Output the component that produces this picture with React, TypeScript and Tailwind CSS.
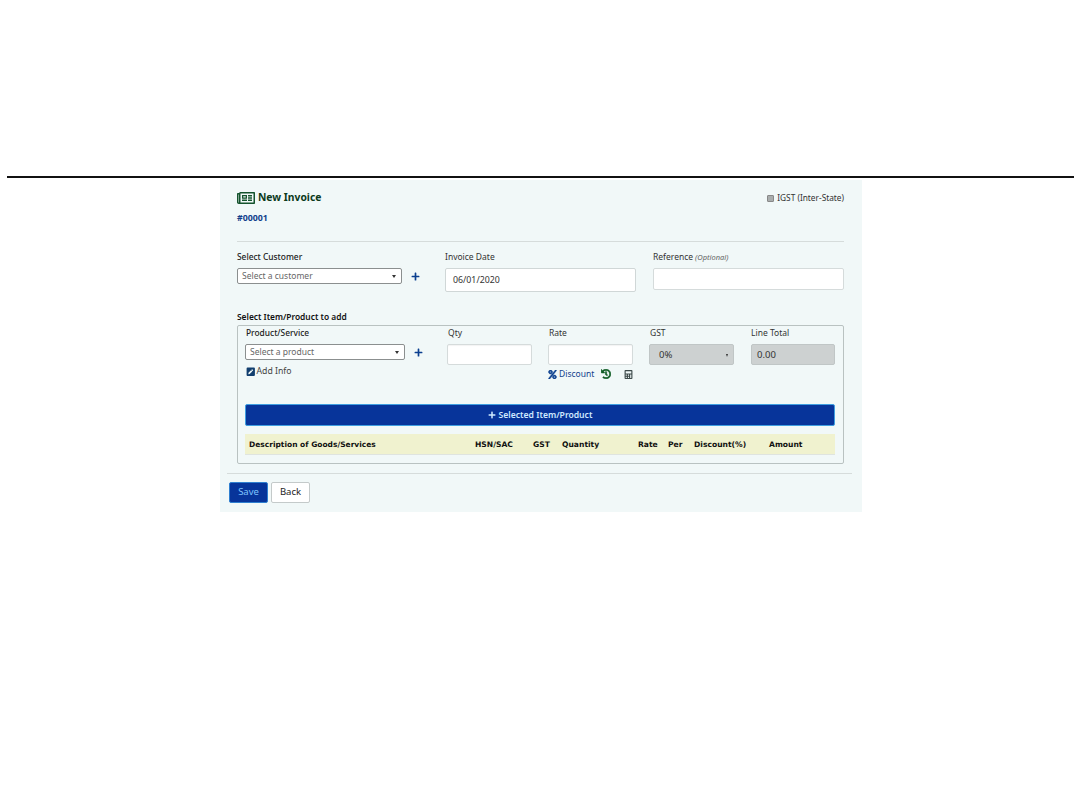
import React from 'react'
import { FaRegNewspaper, FaPlus, FaPercent, FaHistory, FaCalculator, FaPenSquare } from 'react-icons/fa'

const bodyFont = "font-['Noto_Sans',sans-serif]"
const tableFont = "font-['DejaVu_Sans',sans-serif]"

const inputClass = 'h-[21px] bg-white border border-[#d5dbdb] rounded-[2px] shadow-[inset_0_1px_1px_rgba(0,0,0,0.05)]'
const greyClass = 'h-[21px] bg-[#cdd1d1] border border-[#c0c6c6] rounded-[2px] flex items-center pt-[1px] text-[9.5px] text-[#333]'

function SelectBox({ text, width }: { text: string; width: string }) {
  return (
    <div className={`${width} h-[16px] bg-white border border-[#8b8f8f] rounded-[2px] flex items-center justify-between pl-[4px] pr-[5px] text-[8.5px] text-[#666]`}>
      <span className="pt-[1px]">{text}</span>
      <span className="w-0 h-0 border-x-[2px] border-x-transparent border-t-[3px] border-t-[#333]" />
    </div>
  )
}

export default function App() {
  const columns = [
    { label: 'HSN/SAC', w: 'w-[58px]' },
    { label: 'GST', w: 'w-[29px]' },
    { label: 'Quantity', w: 'w-[76px]' },
    { label: 'Rate', w: 'w-[30px]' },
    { label: 'Per', w: 'w-[26px]' },
    { label: 'Discount(%)', w: 'w-[75px]' },
    { label: 'Amount', w: 'w-[50px]' },
  ]

  return (
    <div className={`w-[1080px] h-[810px] bg-white pt-[176px] ${bodyFont}`}>
      <div className="mx-[7px] w-[1067px] h-[2px] bg-[#111]" />
      <div className="ml-[220px] mt-[2px] w-[642px] h-[332px] bg-[#f1f8f8] flex flex-col">
        <div className="ml-[17px] mr-[18px] mt-[9px] flex justify-between">
          <div className="flex items-center gap-[3px] h-[18px]">
            <FaRegNewspaper className="text-[#14532d] text-[18px]" />
            <span className="text-[10.3px] font-bold text-[#0c3a1c]">New Invoice</span>
          </div>
          <div className="flex items-center gap-[3px] h-[18px]">
            <span className="w-[7px] h-[7px] bg-[#a9adad] border border-[#888] rounded-[1px]" />
            <span className="text-[8.3px] text-[#333]">IGST (Inter-State)</span>
          </div>
        </div>
        <div className="ml-[17px] mt-[6px] h-[12px] flex items-center text-[8.8px] font-bold text-[#123f8c]">#00001</div>

        <div className="ml-[17px] mr-[18px] mt-[16px] h-px bg-[#d6dcdb]" />

        <div className="ml-[17px] mr-[18px] mt-[9px] flex">
          <div className="w-[208px]">
            <div className="h-[13px] flex items-center text-[8.4px] text-[#222] font-medium">Select Customer</div>
            <div className="mt-[4px] flex items-center gap-[9px]">
              <SelectBox text="Select a customer" width="w-[165px]" />
              <FaPlus className="text-[#0b3f8f] text-[9px]" />
            </div>
          </div>
          <div className="w-[208px]">
            <div className="h-[13px] flex items-center text-[8.5px] text-[#333]">Invoice Date</div>
            <div className="mt-[4px] w-[191px] h-[24px] bg-white border border-[#d0d7d7] rounded-[2px] flex items-center pl-[7px] pt-[1px] text-[8.8px] text-[#333]">06/01/2020</div>
          </div>
          <div className="flex-1">
            <div className="h-[13px] flex items-center gap-[2px] text-[8.5px] text-[#333]">
              Reference <i className="text-[7.5px] text-[#666]">(Optional)</i>
            </div>
            <div className="mt-[4px] w-[191px] h-[22px] bg-white border border-[#d5dbdb] rounded-[2px]" />
          </div>
        </div>

        <div className="ml-[17px] mt-[19px] mb-[1px] h-[13px] flex items-center text-[8.4px] font-semibold text-[#111]">Select Item/Product to add</div>

        <div className="ml-[17px] mr-[18px] h-[139px] border border-[#b9c2c1] rounded-[2px] pl-[7px] pr-[8px] pt-[1px] flex flex-col">
          <div className="flex">
            <div className="w-[202px]">
              <div className="h-[13px] pl-[1px] flex items-center text-[8.4px] text-[#222] font-medium">Product/Service</div>
              <div className="mt-[4px] flex items-center gap-[9px]">
                <SelectBox text="Select a product" width="w-[160px]" />
                <FaPlus className="text-[#0b3f8f] text-[9px]" />
              </div>
              <div className="mt-[5px] pl-[1px] flex items-center text-[8.7px] text-[#444]">
                <FaPenSquare className="text-[#123f6f] text-[9.5px] mr-[1px]" />
                Add Info
              </div>
            </div>
            <div className="w-[101px]">
              <div className="h-[13px] pl-[1px] flex items-center text-[8.5px] text-[#333]">Qty</div>
              <div className={`mt-[4px] w-[85px] ${inputClass}`} />
            </div>
            <div className="w-[101px]">
              <div className="h-[13px] pl-[1px] flex items-center text-[8.5px] text-[#333]">Rate</div>
              <div className={`mt-[4px] w-[85px] ${inputClass}`} />
              <div className="mt-[3px] h-[12px] flex items-center text-[8.5px] text-[#123f8c]">
                <FaPercent className="text-[9px] mr-[2px] text-[#0b3f8f] stroke-[30px]" />
                Discount
                <FaHistory className="ml-[7px] text-[10px] text-[#0f5c24] stroke-[30px]" />
                <FaCalculator className="ml-[13px] text-[9px] text-[#3d4a4a]" />
              </div>
            </div>
            <div className="w-[102px]">
              <div className="h-[13px] pl-[1px] flex items-center text-[8.5px] text-[#333]">GST</div>
              <div className={`mt-[4px] w-[85px] justify-between pl-[9px] pr-[5px] ${greyClass}`}>
                <span>0%</span>
                <span className="w-0 h-0 border-x-[1.5px] border-x-transparent border-t-[3px] border-t-[#333]" />
              </div>
            </div>
            <div className="flex-1">
              <div className="h-[13px] flex items-center text-[8.5px] text-[#333]">Line Total</div>
              <div className={`mt-[4px] w-[84px] pl-[5px] ${greyClass}`}>0.00</div>
            </div>
          </div>

          <div className="mt-[24px] h-[22px] bg-[#07349a] border border-[#3f9fe0] rounded-[2px] flex items-center justify-center gap-[3px] text-[8.6px] text-[#cfeaff] font-semibold">
            <FaPlus className="text-[8px]" />
            Selected Item/Product
          </div>

          <div className={`mt-[8px] h-[20px] bg-[#f0f2cf] flex items-center pl-[4px] pt-[2px] text-[7.6px] font-bold text-[#111] ${tableFont}`}>
            <div className="w-[226px] text-[7.5px]">Description of Goods/Services</div>
            {columns.map((col) => (
              <div key={col.label} className={col.w}>{col.label}</div>
            ))}
          </div>
          <div className="h-px bg-[#dfe4df]" />
        </div>

        <div className="mx-[7px] mt-[9px] w-[625px] h-px bg-[#d6dcdb]" />

        <div className="ml-[9px] mt-[8px] flex gap-[3px] text-[9.5px]">
          <div className="w-[39px] h-[21px] bg-[#07349a] border border-[#2f7fd0] rounded-[2px] flex items-center justify-center text-[#7fc4ff]">Save</div>
          <div className="w-[39px] h-[21px] bg-white border border-[#c4caca] rounded-[2px] flex items-center justify-center text-[#222]">Back</div>
        </div>
      </div>
    </div>
  )
}
